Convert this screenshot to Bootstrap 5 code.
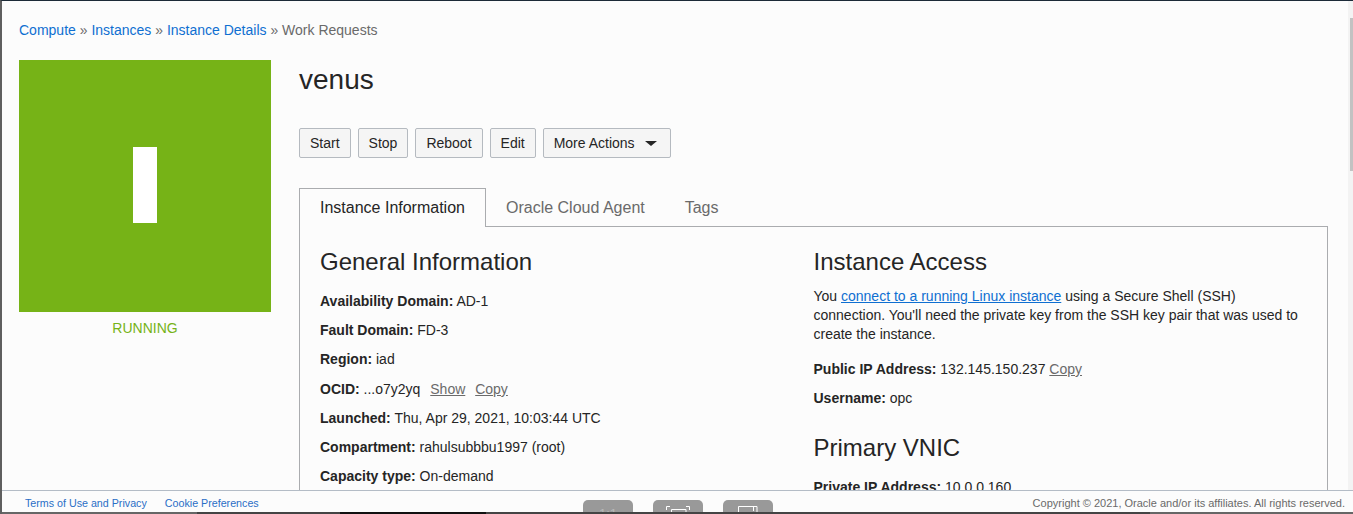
<!DOCTYPE html>
<html lang="en">
<head>
<meta charset="utf-8">
<title>venus - Work Requests</title>
<link href="https://cdn.jsdelivr.net/npm/bootstrap@5.3.0/dist/css/bootstrap.min.css" rel="stylesheet">
<style>
html,body{height:514px;overflow:hidden;margin:0;}
body{font-family:"Liberation Sans",Arial,sans-serif;font-size:14px;color:#252525;background:#fcfcfc;}
.app-frame{height:514px;display:flex;flex-direction:column;position:relative;border-top:1px solid #1c2a38;border-left:2px solid #5f5f5f;background:#fcfcfc;}
.app-main{flex:1 1 auto;min-height:0;overflow:hidden;display:flex;}
.app-scroll{flex:1 1 auto;min-width:0;padding:20px 20px 0 17px;overflow:hidden;}
.app-rail{flex:0 0 5px;width:5px;background:#f3f3f3;}
.app-thumb{height:153px;margin-top:17px;margin-left:2px;background:#c2c2c2;}
.crumbs{font-size:14px;line-height:18px;color:#6a6a6a;margin-bottom:21px;}
.crumbs a{color:#0f6fd1;text-decoration:none;}
.hero{width:252px;flex:0 0 252px;}
.hero-tile{height:252px;background:#76b317;display:flex;align-items:center;justify-content:center;}
.hero-bar{width:24px;height:76px;margin-bottom:2px;background:#fff;}
.hero-state{color:#76b317;font-size:14px;line-height:18px;text-align:center;margin-top:7px;}
.detail{margin-left:28px;flex:1 1 auto;min-width:0;}
.title{font-size:28px;line-height:40px;font-weight:400;color:#252525;margin:0 0 28px;}
.act{font-size:14px;line-height:16px;height:30px;padding:6px 10px;color:#252525;background:#f5f5f5;border:1px solid #b5bac0;border-radius:2px;}
.act-more{padding-left:10px;padding-right:13px;}
.act-gap{gap:7px;margin-bottom:30px;}
.caret-down{display:inline-block;width:0;height:0;border-left:6px solid transparent;border-right:6px solid transparent;border-top:5px solid #252525;margin-left:6px;vertical-align:2px;}
.tabs-row{border-bottom:1px solid #aaacaf;height:39px;gap:0;}
.tabs-row .nav-link{font-size:16px;line-height:18px;color:#6a6a6a;padding:11px 20px 10px;border:0;border-radius:0;background:transparent;height:39px;}
.tabs-row .nav-link.active{color:#252525;background:#fcfcfc;border:1px solid #aaacaf;border-bottom:0;height:39px;padding:10px 20px;margin-bottom:-1px;}
.panel{border:1px solid #aaacaf;border-top:0;padding:20px 20px 0;height:400px;}
.head{font-size:24px;line-height:30px;font-weight:400;color:#252525;margin:0 0 15px;}
.head-tight{margin-bottom:10px;}
.head-next{margin-top:26px;}
.fact{line-height:18px;margin:0 0 11px;}
.fact-low{margin-top:12px;}
.fact b{font-weight:700;}
.dim-link{color:#6a6a6a;text-decoration:underline;margin-left:6px;}
.dim-link.near{margin-left:0;}
.para{line-height:19px;margin:0 0 16px;}
.para a{color:#0f6fd1;}
.app-foot{flex:0 0 22px;height:22px;border-top:1px solid #b4bcc6;background:#fcfcfc;display:flex;justify-content:space-between;align-items:center;padding:4px 8px 0 23px;font-size:11px;position:relative;z-index:1;}
.app-foot a{color:#2a6ec6;text-decoration:none;font-size:10.7px;margin-right:15px;}
.app-foot span{color:#6a6a6a;}
.strip{flex:0 0 2px;height:2px;position:relative;z-index:3;background:linear-gradient(90deg,#666 0,#666 195px,#444 195px,#444 338px,#111 338px,#111 484px,#444 484px,#444 1148px,#666 1148px,#666 100%);}
.tool{position:absolute;top:499px;width:50px;height:12px;background:#999;border-radius:5px 5px 0 0;color:#b8b8b8;font-size:13px;line-height:18px;text-align:center;z-index:2;overflow:hidden;}
.tool svg{display:block;margin:6px auto 0;}
.t1{left:581px;padding-top:5px;}.t2{left:651px}.t3{left:721px}
</style>
</head>
<body>
<div class="app-frame">
  <div class="app-main">
    <div class="app-scroll">
      <div class="crumbs"><a href="#">Compute</a> » <a href="#">Instances</a> » <a href="#">Instance Details</a> » Work Requests</div>
      <div class="d-flex">
        <div class="hero">
          <div class="hero-tile"><div class="hero-bar"></div></div>
          <div class="hero-state">RUNNING</div>
        </div>
        <div class="detail">
          <h1 class="title">venus</h1>
          <div class="d-flex act-gap">
            <button class="btn act" type="button">Start</button>
            <button class="btn act" type="button">Stop</button>
            <button class="btn act" type="button">Reboot</button>
            <button class="btn act" type="button">Edit</button>
            <button class="btn act act-more" type="button">More Actions <span class="caret-down"></span></button>
          </div>
          <ul class="nav tabs-row">
            <li class="nav-item"><a class="nav-link active" href="#">Instance Information</a></li>
            <li class="nav-item"><a class="nav-link" href="#">Oracle Cloud Agent</a></li>
            <li class="nav-item"><a class="nav-link" href="#">Tags</a></li>
          </ul>
          <div class="panel">
            <div class="row g-0">
              <div class="col-6">
                <h2 class="head">General Information</h2>
                <p class="fact"><b>Availability Domain:</b> AD-1</p>
                <p class="fact"><b>Fault Domain:</b> FD-3</p>
                <p class="fact"><b>Region:</b> iad</p>
                <p class="fact fact-low"><b>OCID:</b> ...o7y2yq <a class="dim-link" href="#">Show</a> <a class="dim-link" href="#">Copy</a></p>
                <p class="fact"><b>Launched:</b> Thu, Apr 29, 2021, 10:03:44 UTC</p>
                <p class="fact"><b>Compartment:</b> rahulsubbbu1997 (root)</p>
                <p class="fact"><b>Capacity type:</b> On-demand</p>
              </div>
              <div class="col-6">
                <h2 class="head head-tight">Instance Access</h2>
                <p class="para">You <a href="#">connect to a running Linux instance</a> using a Secure Shell (SSH) connection. You'll need the private key from the SSH key pair that was used to create the instance.</p>
                <p class="fact"><b>Public IP Address:</b> 132.145.150.237 <a class="dim-link near" href="#">Copy</a></p>
                <p class="fact"><b>Username:</b> opc</p>
                <h2 class="head head-next">Primary VNIC</h2>
                <p class="fact"><b>Private IP Address:</b> 10.0.0.160</p>
              </div>
            </div>
          </div>
        </div>
      </div>
    </div>
    <div class="app-rail"><div class="app-thumb"></div></div>
  </div>
  <div class="app-foot">
    <div><a href="#">Terms of Use and Privacy</a> <a href="#">Cookie Preferences</a></div>
    <span>Copyright © 2021, Oracle and/or its affiliates. All rights reserved.</span>
  </div>
  <div class="strip"></div>
  <div class="tool t1">1:1</div>
  <div class="tool t2"><svg width="24" height="8" viewBox="0 0 24 8" fill="none" stroke="#fff" stroke-width="1"><path d="M.5 4V.5h3.500M20 .5h3.500V4M5.500 8V3.500h14.500V8"/></svg></div>
  <div class="tool t3"><svg width="20" height="8" viewBox="0 0 20 8" fill="none" stroke="#fff" stroke-width="1"><path d="M.5 8V.5h18.500V8M15.500 .5V5"/></svg></div>
</div>
<script src="https://cdn.jsdelivr.net/npm/bootstrap@5.3.0/dist/js/bootstrap.bundle.min.js"></script>
</body>
</html>
